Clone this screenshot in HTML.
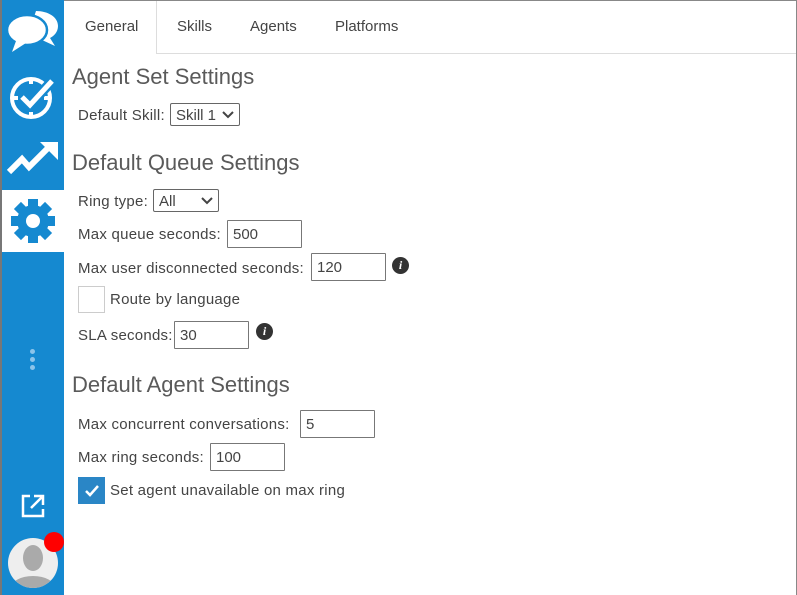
<!DOCTYPE html>
<html><head><meta charset="utf-8"><style>
*{margin:0;padding:0;box-sizing:border-box}
body{width:797px;height:595px;position:relative;background:#fff;font-family:"Liberation Sans",sans-serif;color:#444;overflow:hidden}
.a{position:absolute;white-space:nowrap}
.sb{position:absolute;left:0;top:0;width:64px;height:595px;background:#1589d0;border-left:2px solid #777}
.lbl{font-size:15px;letter-spacing:0.25px}
.h{font-size:22px;color:#5a5a5a}
.in{position:absolute;border:1px solid #777;height:28px;font-size:15px;padding:5px 0 0 5px;background:#fff;border-radius:1px}
.sel{position:absolute;border:1px solid #666;height:23px;font-size:15px;padding:3px 0 0 5px;border-radius:2px}
.tab{position:absolute;top:18px;font-size:15px;color:#444}
</style></head><body>
<div style="position:absolute;left:0;top:0;width:797px;height:1px;background:#888"></div>
<div style="position:absolute;right:0;top:0;width:1px;height:595px;background:#888"></div>
<div class="sb"></div>
<div style="position:absolute;left:2px;top:190px;width:62px;height:62px;background:#fff"></div>
<!-- chat icon -->
<svg class="a" style="left:6px;top:10px" width="54" height="46" viewBox="0 0 54 46">
<path d="M30 1 C42 1 52 7 52 16 C52 22 48 26 44 28 L49 36 L36 30 C30 30 25 28 22 25 Z" fill="#fff"/>
<ellipse cx="21" cy="20" rx="20" ry="15" fill="#fff" stroke="#1589d0" stroke-width="2.5"/>
<path d="M10 31 L6 42 L20 33 Z" fill="#fff"/>
</svg>
<!-- clock check -->
<svg class="a" style="left:8px;top:72px" width="50" height="50" viewBox="0 0 50 50">
<circle cx="23" cy="26" r="19" fill="none" stroke="#fff" stroke-width="4"/>
<path d="M23 6v6M23 40v6M4 26h6M36 26h6" stroke="#fff" stroke-width="4"/>
<path d="M14 25l8 8L44 9" fill="none" stroke="#1589d0" stroke-width="10"/>
<path d="M14 25l8 8L44 9" fill="none" stroke="#fff" stroke-width="5"/>
</svg>
<!-- trend -->
<svg class="a" style="left:6px;top:140px" width="54" height="38" viewBox="0 0 54 38">
<path d="M3 32l13-13 7 8L42 8" fill="none" stroke="#fff" stroke-width="6"/>
<path d="M34 2L52 2L52 20Z" fill="#fff"/>
</svg>
<!-- gear -->
<svg class="a" style="left:10px;top:198px" width="46" height="46" viewBox="0 0 46 46">
<g fill="#1589d0" transform="translate(23 23)">
<circle r="16"/>
<rect x="-5" y="-22" width="10" height="10"/>
<rect x="-5" y="-22" width="10" height="10" transform="rotate(45)"/>
<rect x="-5" y="-22" width="10" height="10" transform="rotate(90)"/>
<rect x="-5" y="-22" width="10" height="10" transform="rotate(135)"/>
<rect x="-5" y="-22" width="10" height="10" transform="rotate(180)"/>
<rect x="-5" y="-22" width="10" height="10" transform="rotate(225)"/>
<rect x="-5" y="-22" width="10" height="10" transform="rotate(270)"/>
<rect x="-5" y="-22" width="10" height="10" transform="rotate(315)"/>
<circle r="7" fill="#fff"/>
</g></svg>
<!-- dots -->
<div class="a" style="left:30px;top:349px;width:5px;height:5px;border-radius:50%;background:#8cc4ea"></div>
<div class="a" style="left:30px;top:357px;width:5px;height:5px;border-radius:50%;background:#8cc4ea"></div>
<div class="a" style="left:30px;top:365px;width:5px;height:5px;border-radius:50%;background:#8cc4ea"></div>
<!-- external -->
<svg class="a" style="left:20px;top:493px" width="26" height="26" viewBox="0 0 26 26">
<path d="M10 3H3v20h20v-7" fill="none" stroke="#fff" stroke-width="2.5"/>
<path d="M11 15L23 3M14 3h9v9" fill="none" stroke="#fff" stroke-width="2.5"/>
</svg>
<!-- avatar -->
<svg class="a" style="left:8px;top:530px" width="60" height="65" viewBox="0 0 60 65">
<clipPath id="c"><circle cx="25" cy="33" r="25"/></clipPath>
<circle cx="25" cy="33" r="25" fill="#eee"/>
<g clip-path="url(#c)" fill="#aaa"><ellipse cx="25" cy="28" rx="10" ry="13"/><ellipse cx="25" cy="58" rx="22" ry="12"/></g>
<circle cx="46" cy="12" r="10" fill="#f00"/>
</svg>
<!-- tabs -->
<div class="a" style="left:64px;top:53px;width:732px;height:1px;background:#ddd"></div>
<div class="a" style="left:64px;top:1px;width:93px;height:53px;background:#fff;border-right:1px solid #ddd"></div>
<div class="tab" style="left:85px">General</div>
<div class="tab" style="left:177px">Skills</div>
<div class="tab" style="left:250px">Agents</div>
<div class="tab" style="left:335px">Platforms</div>
<div class="a h" style="left:72px;top:64px">Agent Set Settings</div>
<div class="a lbl" style="left:78px;top:107px">Default Skill:</div>
<div class="sel" style="left:170px;top:103px;width:70px">Skill 1</div>
<svg class="a" style="left:222px;top:111px" width="12" height="8"><path d="M1 1l5 5 5-5" fill="none" stroke="#444" stroke-width="2"/></svg>
<div class="a h" style="left:72px;top:150px">Default Queue Settings</div>
<div class="a lbl" style="left:78px;top:193px">Ring type:</div>
<div class="sel" style="left:153px;top:189px;width:66px">All</div>
<svg class="a" style="left:201px;top:197px" width="12" height="8"><path d="M1 1l5 5 5-5" fill="none" stroke="#444" stroke-width="2"/></svg>
<div class="a lbl" style="left:78px;top:226px">Max queue seconds:</div>
<div class="in" style="left:227px;top:220px;width:75px">500</div>
<div class="a lbl" style="left:78px;top:260px">Max user disconnected seconds:</div>
<div class="in" style="left:311px;top:253px;width:75px">120</div>
<div class="a" style="left:392px;top:257px;width:17px;height:17px;border-radius:50%;background:#333;color:#fff;font:bold italic 12px 'Liberation Serif',serif;text-align:center;line-height:17px">i</div>
<div class="a" style="left:78px;top:286px;width:27px;height:27px;border:1px solid #ccc"></div>
<div class="a lbl" style="left:110px;top:291px">Route by language</div>
<div class="a lbl" style="left:78px;top:327px">SLA seconds:</div>
<div class="in" style="left:174px;top:321px;width:75px">30</div>
<div class="a" style="left:256px;top:323px;width:17px;height:17px;border-radius:50%;background:#333;color:#fff;font:bold italic 12px 'Liberation Serif',serif;text-align:center;line-height:17px">i</div>
<div class="a h" style="left:72px;top:372px">Default Agent Settings</div>
<div class="a lbl" style="left:78px;top:416px">Max concurrent conversations:</div>
<div class="in" style="left:300px;top:410px;width:75px">5</div>
<div class="a lbl" style="left:78px;top:449px">Max ring seconds:</div>
<div class="in" style="left:210px;top:443px;width:75px">100</div>
<div class="a" style="left:78px;top:477px;width:27px;height:27px;background:#2a86c6"></div>
<svg class="a" style="left:84px;top:484px" width="16" height="13"><path d="M2 7l4 4 8-9" fill="none" stroke="#fff" stroke-width="2.5"/></svg>
<div class="a lbl" style="left:110px;top:482px">Set agent unavailable on max ring</div>
</body></html>
